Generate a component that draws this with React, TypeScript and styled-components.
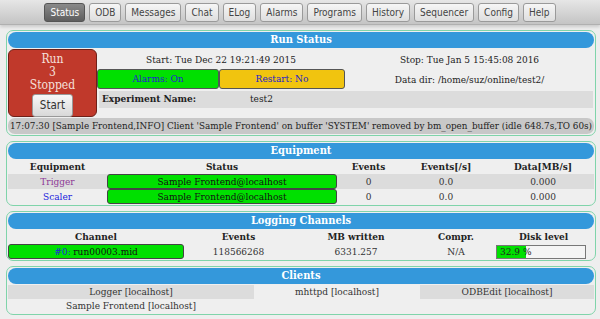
import styled, { createGlobalStyle } from 'styled-components'

const GlobalStyle = createGlobalStyle`
  body {
    margin: 0;
    background: #eeeeee;
    font-family: 'DejaVu Serif Condensed', 'DejaVu Serif', serif;
    font-stretch: semi-condensed;
    font-size: 10px;
    color: #222;
  }
`

const menu = [
  'Status',
  'ODB',
  'Messages',
  'Chat',
  'ELog',
  'Alarms',
  'Programs',
  'History',
  'Sequencer',
  'Config',
  'Help',
]

const App = () => {
  return (
    <>
      <GlobalStyle />
      <MenuBar>
        {menu.map((m) => (
          <MenuButton key={m} $active={m === 'Status'}>
            {m}
          </MenuButton>
        ))}
      </MenuBar>
      <Page>
        <Panel>
          <Header>Run Status</Header>
          <RunGrid>
            <RunBox>
              <div>Run</div>
              <div>3</div>
              <div>Stopped</div>
              <StartButton>Start</StartButton>
            </RunBox>
            <TimeCell $span={2}>Start: Tue Dec 22 19:21:49 2015</TimeCell>
            <TimeCell>Stop: Tue Jan 5 15:45:08 2016</TimeCell>
            <Flag $bg="#00e000">Alarms: On</Flag>
            <Flag $bg="#f1c40f">Restart: No</Flag>
            <TimeCell>Data dir: /home/suz/online/test2/</TimeCell>
            <ExpRow>
              <b>Experiment Name:</b>
              <span>test2</span>
            </ExpRow>
          </RunGrid>
          <Message>
            17:07:30 [Sample Frontend,INFO] Client 'Sample Frontend' on buffer
            'SYSTEM' removed by bm_open_buffer (idle 648.7s,TO 60s)
          </Message>
        </Panel>

        <Panel>
          <Header>Equipment</Header>
          <Table $cols="99px 230px 63px 92px 1fr">
            <Th>Equipment</Th>
            <Th>Status</Th>
            <Th>Events</Th>
            <Th>Events[/s]</Th>
            <Th>Data[MB/s]</Th>

            <Td $shade>
              <Link $visited>Trigger</Link>
            </Td>
            <Td $shade>
              <GreenBox>Sample Frontend@localhost</GreenBox>
            </Td>
            <Td $shade>0</Td>
            <Td $shade>0.0</Td>
            <Td $shade>0.000</Td>

            <Td>
              <Link>Scaler</Link>
            </Td>
            <Td>
              <GreenBox>Sample Frontend@localhost</GreenBox>
            </Td>
            <Td>0</Td>
            <Td>0.0</Td>
            <Td>0.000</Td>
          </Table>
        </Panel>

        <Panel>
          <Header>Logging Channels</Header>
          <Table $cols="176px 109px 126px 74px 1fr">
            <Th>Channel</Th>
            <Th>Events</Th>
            <Th>MB written</Th>
            <Th>Compr.</Th>
            <Th>Disk level</Th>

            <Td>
              <GreenBox>
                <Link>#0:</Link> run00003.mid
              </GreenBox>
            </Td>
            <Td>118566268</Td>
            <Td>6331.257</Td>
            <Td>N/A</Td>
            <Td>
              <DiskBar>
                <DiskFill style={{ width: '32.9%' }} />
                <DiskText>32.9 %</DiskText>
              </DiskBar>
            </Td>
          </Table>
        </Panel>

        <Panel>
          <Header>Clients</Header>
          <Table $cols="246px 166px 1fr">
            <ClientCell $shade>Logger [localhost]</ClientCell>
            <ClientCell>mhttpd [localhost]</ClientCell>
            <ClientCell $shade>ODBEdit [localhost]</ClientCell>
            <ClientCell>Sample Frontend [localhost]</ClientCell>
          </Table>
        </Panel>
      </Page>
    </>
  )
}

export default App

const MenuBar = styled.div`
  display: flex;
  justify-content: center;
  gap: 4px;
  height: 24px;
  align-items: center;
  background: linear-gradient(#e6e6e6, #c4c4c4);
  border-bottom: 1px solid #b0b0b0;
  box-shadow: 0 2px 3px rgba(0, 0, 0, 0.15);
`

const MenuButton = styled.div<{ $active?: boolean }>`
  font-family: 'DejaVu Sans Condensed', 'DejaVu Sans', sans-serif;
  font-stretch: semi-condensed;
  font-size: 10px;
  height: 19px;
  line-height: 18px;
  padding: 0 5px;
  box-sizing: border-box;
  border-radius: 3px;
  border: 1px solid ${(p) => (p.$active ? '#555' : '#9a9a9a')};
  color: ${(p) => (p.$active ? '#fff' : '#444')};
  background: ${(p) =>
    p.$active
      ? 'linear-gradient(#8a8a8a, #5e5e5e)'
      : 'linear-gradient(#f6f6f6, #dedede)'};
`

const Page = styled.div`
  padding: 5px 4px 0 6px;
  display: flex;
  flex-direction: column;
  gap: 5px;
`

const Panel = styled.div`
  border: 1px solid #7fd4aa;
  border-radius: 7px;
  padding: 1px;
  background: #efefef;
`

const Header = styled.div`
  background: #3498db;
  color: #fff;
  font-weight: bold;
  font-size: 11px;
  text-align: center;
  height: 16px;
  line-height: 16px;
  border-radius: 8px;
`

const RunGrid = styled.div`
  display: grid;
  grid-template-columns: 89px 122px 126px 1fr;
  grid-template-rows: 20px 21px 18px;
  padding-top: 1px;
`

const RunBox = styled.div`
  grid-row: 1 / span 3;
  height: 68px;
  margin-bottom: -9px;
  background: #c0392b;
  border: 1px solid #6e2018;
  border-radius: 6px;
  color: #f5e0dc;
  font-size: 12px;
  display: flex;
  flex-direction: column;
  align-items: center;
  line-height: 13px;
  padding-top: 3px;
  box-sizing: border-box;
  z-index: 1;
`

const StartButton = styled.div`
  margin-top: 2px;
  font-family: 'DejaVu Sans', sans-serif;
  font-size: 11.5px;
  color: #333;
  width: 41px;
  height: 23px;
  line-height: 21px;
  text-align: center;
  border: 1px solid #999;
  border-radius: 3px;
  background: linear-gradient(#f8f8f8, #d8d8d8);
  box-sizing: border-box;
`

const TimeCell = styled.div<{ $span?: number }>`
  grid-column: span ${(p) => p.$span || 1};
  text-align: center;
  line-height: 14px;
  padding-top: 1px;
  align-self: center;
`

const Flag = styled.div<{ $bg: string }>`
  background: ${(p) => p.$bg};
  color: #2222cc;
  border: 1px solid #555;
  border-radius: 3px;
  text-align: center;
  height: 20px;
  line-height: 18px;
  box-sizing: border-box;
`

const ExpRow = styled.div`
  grid-column: 2 / span 3;
  margin: 1px 1px 0 2px;
  background: #dcdcdc;
  display: grid;
  grid-template-columns: 148px 1fr;
  line-height: 16px;
  padding-left: 3px;
`

const Message = styled.div`
  margin-top: 10px;
  background: #c8c8c8;
  border-radius: 7px;
  padding: 0 2px;
  line-height: 16px;
  font-size: 9.8px;
  white-space: nowrap;
  overflow: hidden;
`

const Table = styled.div<{ $cols: string }>`
  display: grid;
  grid-template-columns: ${(p) => p.$cols};
  padding-top: 1px;
`

const Th = styled.div`
  font-weight: bold;
  text-align: center;
  line-height: 14px;
`

const Td = styled.div<{ $shade?: boolean }>`
  text-align: center;
  background: ${(p) => (p.$shade ? '#dcdcdc' : 'transparent')};
  height: 15px;
  line-height: 15px;
  color: #333;
`

const ClientCell = styled.div<{ $shade?: boolean }>`
  text-align: center;
  background: ${(p) => (p.$shade ? '#dcdcdc' : 'transparent')};
  line-height: 14px;
  color: #333;
`

const Link = styled.span<{ $visited?: boolean }>`
  color: ${(p) => (p.$visited ? '#8e3a97' : '#2222dd')};
`

const GreenBox = styled.div`
  background: #00e000;
  border: 1px solid #444;
  border-radius: 3px;
  height: 15px;
  line-height: 13px;
  box-sizing: border-box;
  color: #111;
`

const DiskBar = styled.div`
  position: relative;
  margin: 1px 8px 0 3px;
  height: 14px;
  border: 1px solid #777;
  background: #f4f4f4;
  box-sizing: border-box;
  text-align: left;
`

const DiskFill = styled.div`
  height: 100%;
  background: #00e000;
`

const DiskText = styled.span`
  position: absolute;
  left: 3px;
  top: 0;
  line-height: 12px;
  color: #222;
`
